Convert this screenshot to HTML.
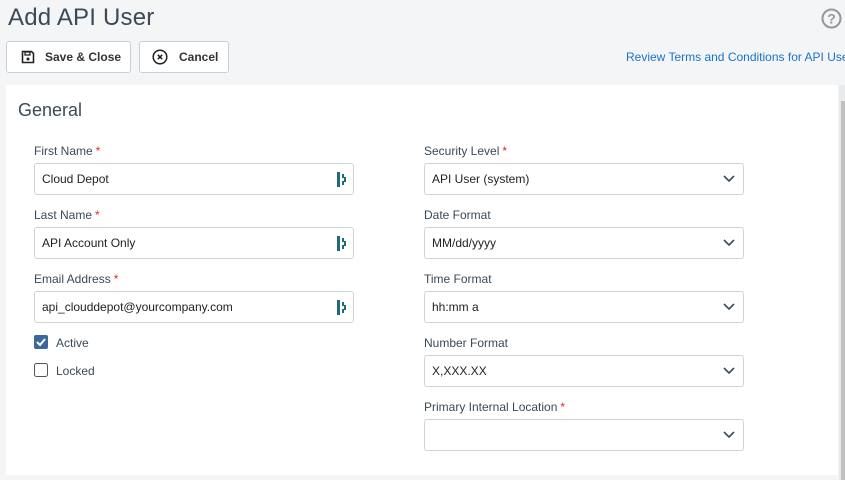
<!DOCTYPE html>
<html><head><meta charset="utf-8"><style>
*{box-sizing:border-box;margin:0;padding:0}
body{width:845px;height:480px;overflow:hidden;background:#f4f5f7;font-family:"Liberation Sans",Arial,sans-serif;position:relative;color:#333}
.abs{position:absolute}
h1{position:absolute;left:8px;top:4px;font-size:24px;font-weight:normal;color:#3b4a56;letter-spacing:0.2px}
.btn{position:absolute;top:41px;height:32px;background:#fff;border:1px solid #c9cfd4;border-radius:3px;font-size:12px;font-weight:bold;color:#333;display:flex;align-items:center}
.card{position:absolute;left:6px;top:85px;width:832px;height:390px;background:#fff}
.lbl{position:absolute;font-size:12px;color:#3b4a56}
.lbl b{color:#d0312d;font-weight:normal;margin-left:3px}
.inp{position:absolute;height:32px;border:1px solid #cfd4d8;border-radius:3px;background:#fff;font-size:12px;color:#222;padding-left:7px;line-height:30px}
.ic{position:absolute;right:6px;top:8px}
.chev{position:absolute;right:8px;top:11px}
</style></head><body>
<h1>Add API User</h1>
<svg class="abs" style="left:821px;top:8px" width="21" height="21" viewBox="0 0 21 21"><circle cx="10.5" cy="10.5" r="9" fill="none" stroke="#8f999f" stroke-width="2"/><text x="10.5" y="15.5" text-anchor="middle" font-size="14" font-weight="bold" fill="#8f999f" font-family="Liberation Sans">?</text></svg>
<div class="btn" style="left:6px;width:125px">
<svg style="margin-left:14px" width="14" height="14" viewBox="0 0 14 14"><path d="M1.5 1.5h9l2 2v9h-11z" fill="none" stroke="#222" stroke-width="1.6"/><rect x="4" y="2" width="5" height="3" fill="none" stroke="#222" stroke-width="1.3"/><circle cx="7" cy="9" r="1.5" fill="#222"/></svg>
<span style="margin-left:10px">Save &amp; Close</span></div>
<div class="btn" style="left:139px;width:90px">
<svg style="margin-left:12px" width="16" height="16" viewBox="0 0 16 16"><circle cx="8" cy="8" r="6.8" fill="none" stroke="#222" stroke-width="1.5"/><path d="M5.8 5.8l4.4 4.4M10.2 5.8l-4.4 4.4" stroke="#222" stroke-width="1.5"/></svg>
<span style="margin-left:11px">Cancel</span></div>
<div class="abs" style="left:626px;top:50px;font-size:12px;color:#1a73c8;white-space:nowrap">Review Terms and Conditions for API User</div>
<div class="card"></div>
<div class="abs" style="left:839px;top:85px;width:6px;height:395px;background:#e9eaeb"></div>
<div class="abs" style="left:841px;top:101px;width:4px;height:379px;background:#c1c1c1"></div>
<div class="abs" style="left:18px;top:100px;font-size:18px;color:#3b4a56">General</div>

<div class="lbl" style="left:34px;top:144px">First Name<b>*</b></div>
<div class="inp" style="left:34px;top:163px;width:320px">Cloud Depot<svg class="ic" width="11" height="15" viewBox="0 0 11 15"><rect x="1" y="0" width="3" height="15" fill="#1e6b7a"/><rect x="6" y="2" width="2" height="4" fill="#1e6b7a"/><rect x="8" y="5" width="2" height="5" fill="#1e6b7a"/><rect x="6" y="9" width="2" height="4" fill="#1e6b7a"/></svg></div>
<div class="lbl" style="left:34px;top:208px">Last Name<b>*</b></div>
<div class="inp" style="left:34px;top:227px;width:320px">API Account Only<svg class="ic" width="11" height="15" viewBox="0 0 11 15"><rect x="1" y="0" width="3" height="15" fill="#1e6b7a"/><rect x="6" y="2" width="2" height="4" fill="#1e6b7a"/><rect x="8" y="5" width="2" height="5" fill="#1e6b7a"/><rect x="6" y="9" width="2" height="4" fill="#1e6b7a"/></svg></div>
<div class="lbl" style="left:34px;top:272px">Email Address<b>*</b></div>
<div class="inp" style="left:34px;top:291px;width:320px">api_clouddepot@yourcompany.com<svg class="ic" width="11" height="15" viewBox="0 0 11 15"><rect x="1" y="0" width="3" height="15" fill="#1e6b7a"/><rect x="6" y="2" width="2" height="4" fill="#1e6b7a"/><rect x="8" y="5" width="2" height="5" fill="#1e6b7a"/><rect x="6" y="9" width="2" height="4" fill="#1e6b7a"/></svg></div>

<svg class="abs" style="left:34px;top:335px" width="14" height="14"><rect width="14" height="14" rx="2" fill="#3a6898"/><path d="M3 7l3 3 5-6" fill="none" stroke="#fff" stroke-width="2"/></svg>
<div class="lbl" style="left:56px;top:336px">Active</div>
<svg class="abs" style="left:34px;top:363px" width="14" height="14"><rect x="0.5" y="0.5" width="13" height="13" rx="2" fill="#fff" stroke="#555"/></svg>
<div class="lbl" style="left:56px;top:364px">Locked</div>

<div class="lbl" style="left:424px;top:144px">Security Level<b>*</b></div>
<div class="inp" style="left:424px;top:163px;width:320px">API User (system)<svg class="chev" width="12" height="8"><path d="M1 1l5 5 5-5" fill="none" stroke="#3b4a56" stroke-width="1.6"/></svg></div>
<div class="lbl" style="left:424px;top:208px">Date Format</div>
<div class="inp" style="left:424px;top:227px;width:320px">MM/dd/yyyy<svg class="chev" width="12" height="8"><path d="M1 1l5 5 5-5" fill="none" stroke="#3b4a56" stroke-width="1.6"/></svg></div>
<div class="lbl" style="left:424px;top:272px">Time Format</div>
<div class="inp" style="left:424px;top:291px;width:320px">hh:mm a<svg class="chev" width="12" height="8"><path d="M1 1l5 5 5-5" fill="none" stroke="#3b4a56" stroke-width="1.6"/></svg></div>
<div class="lbl" style="left:424px;top:336px">Number Format</div>
<div class="inp" style="left:424px;top:355px;width:320px">X,XXX.XX<svg class="chev" width="12" height="8"><path d="M1 1l5 5 5-5" fill="none" stroke="#3b4a56" stroke-width="1.6"/></svg></div>
<div class="lbl" style="left:424px;top:400px">Primary Internal Location<b>*</b></div>
<div class="inp" style="left:424px;top:419px;width:320px"><svg class="chev" width="12" height="8"><path d="M1 1l5 5 5-5" fill="none" stroke="#3b4a56" stroke-width="1.6"/></svg></div>
</body></html>
